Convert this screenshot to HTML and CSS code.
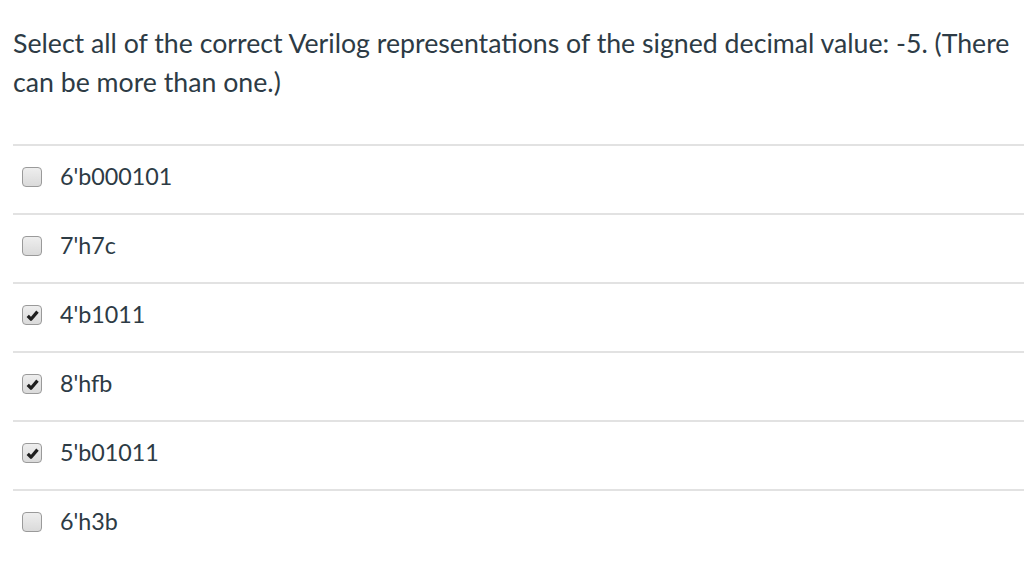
FILE: index.html
```html
<!DOCTYPE html>
<html>
<head>
<meta charset="utf-8">
<link rel="stylesheet" href="styles.css">
</head>
<body>
<div class="quiz">
  <div class="question">Select all of the correct Verilog representations of the signed decimal value: -5. (There can be more than one.)</div>
  <div class="answers">
    <div class="answer"><span class="box"></span><span class="label">6'b000101</span></div>
    <div class="answer"><span class="box"></span><span class="label">7'h7c</span></div>
    <div class="answer"><span class="box checked"><svg viewBox="0 0 12 12" width="13" height="13"><path d="M1.6 6.4 L4.6 9.4 L10.6 2.4" fill="none" stroke="#1e1e1e" stroke-width="3" stroke-linejoin="round"/></svg></span><span class="label">4'b1011</span></div>
    <div class="answer"><span class="box checked"><svg viewBox="0 0 12 12" width="13" height="13"><path d="M1.6 6.4 L4.6 9.4 L10.6 2.4" fill="none" stroke="#1e1e1e" stroke-width="3" stroke-linejoin="round"/></svg></span><span class="label">8'hfb</span></div>
    <div class="answer"><span class="box checked"><svg viewBox="0 0 12 12" width="13" height="13"><path d="M1.6 6.4 L4.6 9.4 L10.6 2.4" fill="none" stroke="#1e1e1e" stroke-width="3" stroke-linejoin="round"/></svg></span><span class="label">5'b01011</span></div>
    <div class="answer"><span class="box"></span><span class="label">6'h3b</span></div>
  </div>
</div>
</body>
</html>
```
FILE: styles.css
```css
html, body {
  margin: 0;
  padding: 0;
  background: #ffffff;
}
body {
  font-family: Lato, "Open Sans", sans-serif;
  color: #2d3b45;
}
.quiz {
  padding: 24px 0 0 13px;
}
.question {
  font-size: 26.7px;
  line-height: 39px;
  margin-bottom: 42px;
}
.answer {
  border-top: 2px solid #e2e2e2;
  height: 67px;
  display: flex;
  align-items: center;
  padding-left: 9px;
}
.box {
  width: 18px;
  height: 18px;
  border: 1px solid #9a9a9a;
  border-radius: 4px;
  background: linear-gradient(#eeeeee, #dadada);
  display: flex;
  align-items: center;
  justify-content: center;
  margin-right: 18px;
  box-sizing: content-box;
  margin-top: -5px;
}
.label {
  font-size: 23.3px;
  margin-top: -8px;
}
```
